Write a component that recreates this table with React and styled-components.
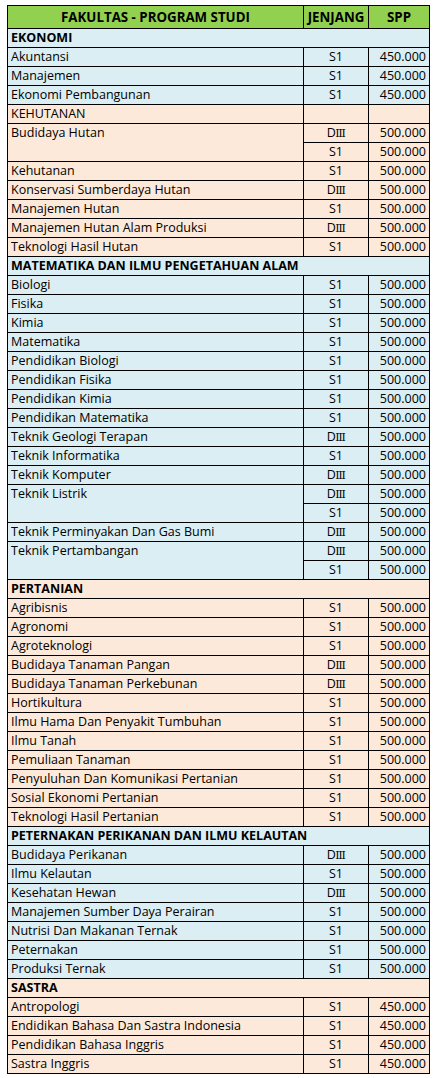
import React from "react";
import styled, { createGlobalStyle } from "styled-components";

const BLUE = "#daeef3";
const PEACH = "#fde9d9";

const GlobalStyle = createGlobalStyle`
  html, body {
    margin: 0;
    padding: 0;
    background: #ffffff;
  }
  body {
    font-family: "Open Sans", "Noto Sans", sans-serif;
    color: #000;
  }
`;

const faculties = [
  {
    name: "EKONOMI",
    color: BLUE,
    programs: [
      { name: "Akuntansi", levels: [["S1", "450.000"]] },
      { name: "Manajemen", levels: [["S1", "450.000"]] },
      { name: "Ekonomi Pembangunan", levels: [["S1", "450.000"]] },
    ],
  },
  {
    name: "KEHUTANAN",
    plain: true,
    color: PEACH,
    programs: [
      { name: "Budidaya Hutan", levels: [["DⅢ", "500.000"], ["S1", "500.000"]] },
      { name: "Kehutanan", levels: [["S1", "500.000"]] },
      { name: "Konservasi Sumberdaya Hutan", levels: [["DⅢ", "500.000"]] },
      { name: "Manajemen Hutan", levels: [["S1", "500.000"]] },
      { name: "Manajemen Hutan Alam Produksi", levels: [["DⅢ", "500.000"]] },
      { name: "Teknologi Hasil Hutan", levels: [["S1", "500.000"]] },
    ],
  },
  {
    name: "MATEMATIKA DAN ILMU PENGETAHUAN ALAM",
    color: BLUE,
    programs: [
      { name: "Biologi", levels: [["S1", "500.000"]] },
      { name: "Fisika", levels: [["S1", "500.000"]] },
      { name: "Kimia", levels: [["S1", "500.000"]] },
      { name: "Matematika", levels: [["S1", "500.000"]] },
      { name: "Pendidikan Biologi", levels: [["S1", "500.000"]] },
      { name: "Pendidikan Fisika", levels: [["S1", "500.000"]] },
      { name: "Pendidikan Kimia", levels: [["S1", "500.000"]] },
      { name: "Pendidikan Matematika", levels: [["S1", "500.000"]] },
      { name: "Teknik Geologi Terapan", levels: [["DⅢ", "500.000"]] },
      { name: "Teknik Informatika", levels: [["S1", "500.000"]] },
      { name: "Teknik Komputer", levels: [["DⅢ", "500.000"]] },
      { name: "Teknik Listrik", levels: [["DⅢ", "500.000"], ["S1", "500.000"]] },
      { name: "Teknik Perminyakan Dan Gas Bumi", levels: [["DⅢ", "500.000"]] },
      { name: "Teknik Pertambangan", levels: [["DⅢ", "500.000"], ["S1", "500.000"]] },
    ],
  },
  {
    name: "PERTANIAN",
    color: PEACH,
    programs: [
      { name: "Agribisnis", levels: [["S1", "500.000"]] },
      { name: "Agronomi", levels: [["S1", "500.000"]] },
      { name: "Agroteknologi", levels: [["S1", "500.000"]] },
      { name: "Budidaya Tanaman Pangan", levels: [["DⅢ", "500.000"]] },
      { name: "Budidaya Tanaman Perkebunan", levels: [["DⅢ", "500.000"]] },
      { name: "Hortikultura", levels: [["S1", "500.000"]] },
      { name: "Ilmu Hama Dan Penyakit Tumbuhan", levels: [["S1", "500.000"]] },
      { name: "Ilmu Tanah", levels: [["S1", "500.000"]] },
      { name: "Pemuliaan Tanaman", levels: [["S1", "500.000"]] },
      { name: "Penyuluhan Dan Komunikasi Pertanian", levels: [["S1", "500.000"]] },
      { name: "Sosial Ekonomi Pertanian", levels: [["S1", "500.000"]] },
      { name: "Teknologi Hasil Pertanian", levels: [["S1", "500.000"]] },
    ],
  },
  {
    name: "PETERNAKAN PERIKANAN DAN ILMU KELAUTAN",
    color: BLUE,
    programs: [
      { name: "Budidaya Perikanan", levels: [["DⅢ", "500.000"]] },
      { name: "Ilmu Kelautan", levels: [["S1", "500.000"]] },
      { name: "Kesehatan Hewan", levels: [["DⅢ", "500.000"]] },
      { name: "Manajemen Sumber Daya Perairan", levels: [["S1", "500.000"]] },
      { name: "Nutrisi Dan Makanan Ternak", levels: [["S1", "500.000"]] },
      { name: "Peternakan", levels: [["S1", "500.000"]] },
      { name: "Produksi Ternak", levels: [["S1", "500.000"]] },
    ],
  },
  {
    name: "SASTRA",
    color: PEACH,
    programs: [
      { name: "Antropologi", levels: [["S1", "450.000"]] },
      { name: "Endidikan Bahasa Dan Sastra Indonesia", levels: [["S1", "450.000"]] },
      { name: "Pendidikan Bahasa Inggris", levels: [["S1", "450.000"]] },
      { name: "Sastra Inggris", levels: [["S1", "450.000"]] },
    ],
  },
];

const Page = styled.div`
  padding: 5px 0 0 7px;
`;

const Table = styled.table`
  border-collapse: collapse;
  table-layout: fixed;
  width: 422px;
  font-size: 12.5px;
  line-height: 18px;
`;

const HeadCell = styled.th`
  background: #92d050;
  border: 1px solid #000;
  height: 22px;
  padding: 0;
  font-size: 13.3px;
  line-height: 22px;
  font-weight: 700;
  text-align: center;
  vertical-align: middle;
  white-space: nowrap;
`;

const Row = styled.tr`
  height: 19px;
  background: ${(p) => p.$bg};
`;

const FacultyCell = styled.td`
  border: 1px solid #000;
  padding: 0 3px;
  height: 18px;
  font-weight: ${(p) => (p.$plain ? 400 : 700)};
  white-space: nowrap;
`;

const NameCell = styled.td`
  border: 1px solid #000;
  padding: 0 3px;
  height: 18px;
  vertical-align: top;
  white-space: nowrap;
`;

const LevelCell = styled.td`
  border: 1px solid #000;
  padding: 0;
  height: 18px;
  text-align: center;
`;

const FeeCell = styled.td`
  border: 1px solid #000;
  padding: 0 3px 0 0;
  height: 18px;
  text-align: right;
`;

const Diploma = styled.span`
  letter-spacing: -0.5px;
`;

const Numeral = styled.span`
  font-family: "DejaVu Serif", "Liberation Serif", serif;
  font-size: 11px;
  line-height: 1;
`;

const Level = ({ value }) =>
  value.startsWith("D") ? (
    <Diploma>
      D<Numeral>Ⅲ</Numeral>
    </Diploma>
  ) : (
    value
  );

function FacultyRows({ faculty }) {
  const rows = [];
  rows.push(
    <Row key={faculty.name} $bg={faculty.color}>
      {faculty.plain ? (
        <>
          <FacultyCell $plain>{faculty.name}</FacultyCell>
          <LevelCell />
          <FeeCell />
        </>
      ) : (
        <FacultyCell colSpan={3}>{faculty.name}</FacultyCell>
      )}
    </Row>
  );
  faculty.programs.forEach((prog) => {
    prog.levels.forEach(([lvl, fee], i) => {
      rows.push(
        <Row key={prog.name + lvl} $bg={faculty.color}>
          {i === 0 && (
            <NameCell rowSpan={prog.levels.length}>{prog.name}</NameCell>
          )}
          <LevelCell>
            <Level value={lvl} />
          </LevelCell>
          <FeeCell>{fee}</FeeCell>
        </Row>
      );
    });
  });
  return rows;
}

export default function App() {
  return (
    <Page>
      <GlobalStyle />
      <Table>
        <colgroup>
          <col style={{ width: 296 }} />
          <col style={{ width: 65 }} />
          <col style={{ width: 61 }} />
        </colgroup>
        <thead>
          <tr>
            <HeadCell>FAKULTAS - PROGRAM STUDI</HeadCell>
            <HeadCell>JENJANG</HeadCell>
            <HeadCell>SPP</HeadCell>
          </tr>
        </thead>
        <tbody>
          {faculties.map((f) => (
            <FacultyRows key={f.name} faculty={f} />
          ))}
        </tbody>
      </Table>
    </Page>
  );
}
